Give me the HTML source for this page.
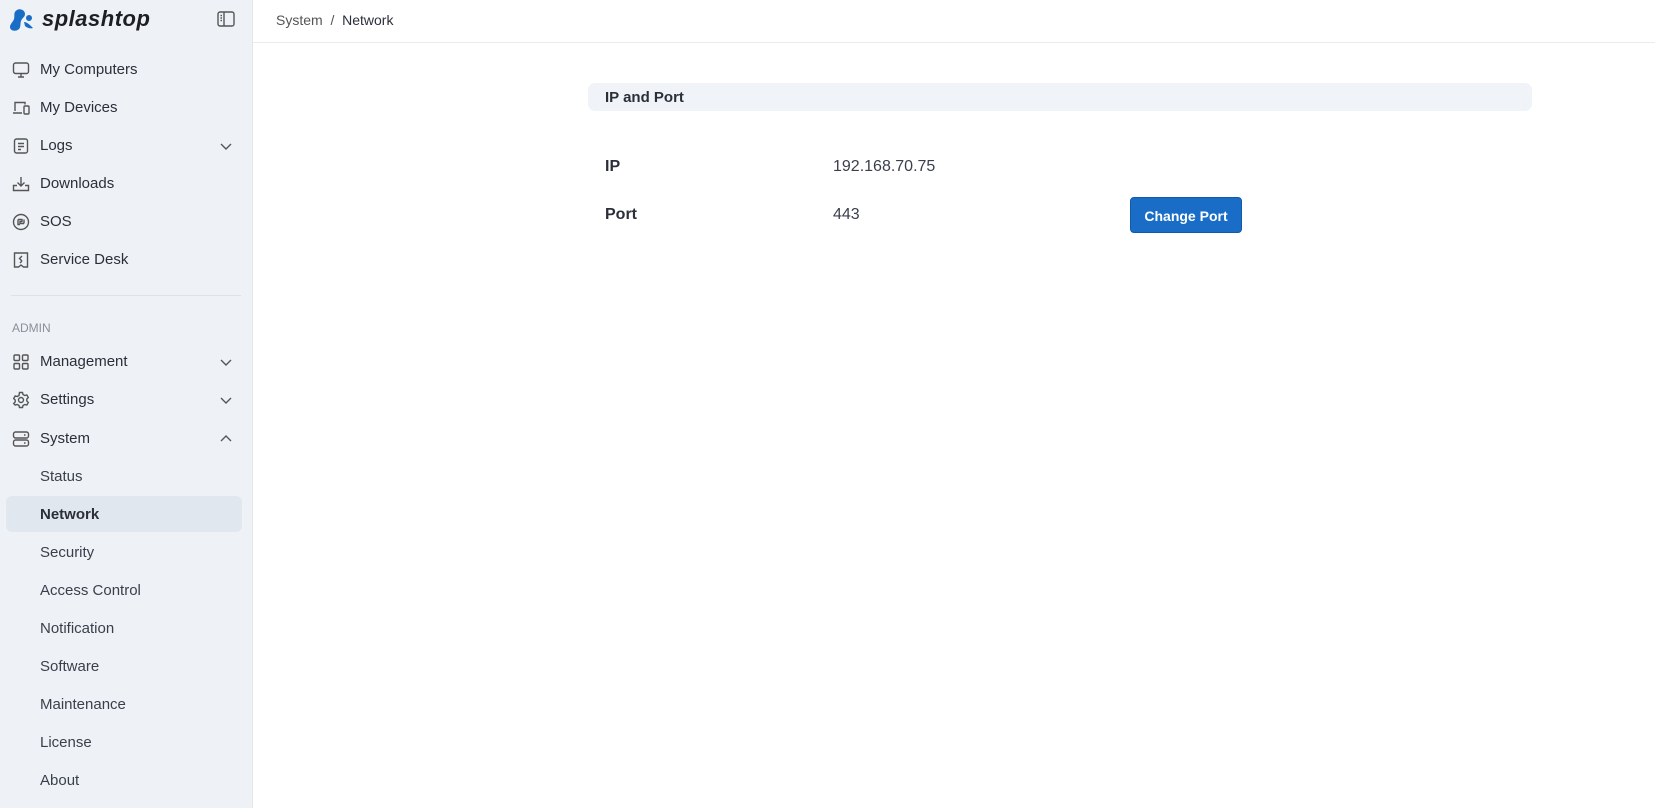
<!DOCTYPE html>
<html><head><meta charset="utf-8"><style>
*{margin:0;padding:0;box-sizing:border-box}
body{width:1655px;height:808px;overflow:hidden;font-family:"Liberation Sans",sans-serif;background:#fff;position:relative;color:#2b2f3a}
#sb{position:absolute;left:0;top:0;width:253px;height:808px;background:#eef2f6;border-right:1px solid #e3e7ec}
.it{position:absolute;left:0;width:253px;height:30px;font-size:15px;line-height:32px;color:#2b2f3a}
.it .t{position:absolute;left:40px;top:0}
.it svg.ic{position:absolute;left:12px;top:7px}
.it svg.ch{position:absolute;left:219px;top:10px}
.sub .t{color:#3a3f4b}
.hl{position:absolute;left:6px;top:496px;width:236px;height:36px;background:#e1e7ee;border-radius:6px}
#hdr{position:absolute;left:253px;top:0;right:0;height:43px;border-bottom:1px solid #e8ebef;font-size:14px;line-height:40px;padding-left:23px;color:#555}
#hdr b{font-weight:normal;color:#2b2f3a}
.card{position:absolute;left:588px;top:83px;width:944px;height:28px;background:#f0f4f8;border-radius:7px;font-weight:bold;font-size:15px;line-height:30px;padding-left:17px;color:#2b2f3a}
.lb{position:absolute;left:605px;font-weight:bold;font-size:16px}
.vl{position:absolute;left:833px;font-size:16px;color:#3a3f4b}
.btn{position:absolute;left:1130px;top:197px;width:112px;height:36px;background:#1a6dc6;border:1px solid #125aa8;border-radius:4px;color:#fff;font-weight:bold;font-size:14px;line-height:36px;text-align:center}
</style></head><body>
<div id="sb">
 <svg style="position:absolute;left:9px;top:8px" width="28" height="26" viewBox="0 0 28 26"><path d="M8 2c3-2 8 0 8 4 0 3-3 4-4 7-1 3 0 6-2 8-3 3-9 2-9-2 0-3 3-5 4-8 1-3-1-7 3-9z" fill="#1a6dc6"/><circle cx="20" cy="10" r="3" fill="#1a6dc6"/><path d="M15 14c3 0 6 3 9 6-2 1-6 0-8-2z" fill="#1a6dc6"/></svg>
 <div style="position:absolute;left:42px;top:6px;font-size:22px;font-style:italic;font-weight:bold;color:#1d1f25;letter-spacing:0.5px">splashtop</div>
 <svg style="position:absolute;left:217px;top:11px" width="18" height="16" viewBox="0 0 18 16" fill="none" stroke="#555" stroke-width="1.4"><rect x="1" y="1" width="16" height="14" rx="2"/><path d="M7 1v14M3.5 4.5h1.5M3.5 7h1.5M3.5 9.5h1.5"/></svg>

 <div class="it" style="top:54px"><svg class="ic" width="18" height="18" viewBox="0 0 18 18" fill="none" stroke="#555" stroke-width="1.4"><rect x="1.5" y="2" width="15" height="10.5" rx="2"/><path d="M9 12.5v3M6 16h6"/></svg><span class="t">My Computers</span></div>
 <div class="it" style="top:92px"><svg class="ic" width="18" height="18" viewBox="0 0 18 18" fill="none" stroke="#555" stroke-width="1.4"><path d="M3 12V3.5h10v2M1 14h9"/><rect x="12" y="7" width="5" height="8" rx="1"/></svg><span class="t">My Devices</span></div>
 <div class="it" style="top:130px"><svg class="ic" width="18" height="18" viewBox="0 0 18 18" fill="none" stroke="#555" stroke-width="1.4"><rect x="2.5" y="2" width="13" height="14" rx="2"/><path d="M6 6.5h6M6 9.5h6M6 12.5h3"/></svg><span class="t">Logs</span><svg class="ch" width="14" height="12" viewBox="0 0 14 12" fill="none" stroke="#555" stroke-width="1.4"><path d="M2 4l5 5 5-5"/></svg></div>
 <div class="it" style="top:168px"><svg class="ic" width="18" height="18" viewBox="0 0 18 18" fill="none" stroke="#555" stroke-width="1.4"><path d="M9 2v9M5.5 7.5L9 11l3.5-3.5M5 10.5H1.5v5h15v-5H13"/></svg><span class="t">Downloads</span></div>
 <div class="it" style="top:206px"><svg class="ic" width="18" height="18" viewBox="0 0 18 18" fill="none" stroke="#555" stroke-width="1.4"><circle cx="9" cy="9" r="7.5"/><path d="M6 6.5h4v2H8v2h4M6 6.5v5h2M12 10.5v-4"/></svg><span class="t">SOS</span></div>
 <div class="it" style="top:244px"><svg class="ic" width="18" height="18" viewBox="0 0 18 18" fill="none" stroke="#555" stroke-width="1.4"><path d="M2.5 2h13v14h-4l-2.5-2-2.5 2h-4z"/><path d="M10 5l-2.5 2.5L10 10M8 12l2-2"/></svg><span class="t">Service Desk</span></div>

 <div style="position:absolute;left:11px;top:295px;width:230px;height:1px;background:#dde2e8"></div>
 <div style="position:absolute;left:12px;top:321px;font-size:12px;color:#8a8f99">ADMIN</div>

 <div class="it" style="top:346px"><svg class="ic" width="18" height="18" viewBox="0 0 18 18" fill="none" stroke="#555" stroke-width="1.4"><rect x="2" y="2" width="5.5" height="5.5" rx="1"/><rect x="10.5" y="2" width="5.5" height="5.5" rx="1"/><rect x="2" y="10.5" width="5.5" height="5.5" rx="1"/><rect x="10.5" y="10.5" width="5.5" height="5.5" rx="1"/></svg><span class="t">Management</span><svg class="ch" width="14" height="12" viewBox="0 0 14 12" fill="none" stroke="#555" stroke-width="1.4"><path d="M2 4l5 5 5-5"/></svg></div>
 <div class="it" style="top:384px"><svg class="ic" width="18" height="18" viewBox="0 0 18 18" fill="none" stroke="#555" stroke-width="1.4"><circle cx="9" cy="9" r="2.5"/><path d="M7.5 1.5h3l.5 2 1.8 1 2-.6 1.5 2.6-1.5 1.5v2l1.5 1.5-1.5 2.6-2-.6-1.8 1-.5 2h-3l-.5-2-1.8-1-2 .6L1.7 12.5l1.5-1.5v-2L1.7 7.5l1.5-2.6 2 .6 1.8-1z"/></svg><span class="t">Settings</span><svg class="ch" width="14" height="12" viewBox="0 0 14 12" fill="none" stroke="#555" stroke-width="1.4"><path d="M2 4l5 5 5-5"/></svg></div>
 <div class="it" style="top:423px"><svg class="ic" width="18" height="18" viewBox="0 0 18 18" fill="none" stroke="#555" stroke-width="1.4"><rect x="1.5" y="2" width="15" height="6" rx="2"/><rect x="1.5" y="10" width="15" height="6" rx="2"/><path d="M12 5h1.5M12 13h1.5"/></svg><span class="t">System</span><svg class="ch" width="14" height="12" viewBox="0 0 14 12" fill="none" stroke="#555" stroke-width="1.4"><path d="M2 8l5-5 5 5"/></svg></div>

 <div class="hl"></div>
 <div class="it sub" style="top:461px"><span class="t">Status</span></div>
 <div class="it sub" style="top:499px"><span class="t" style="font-weight:bold;color:#2b2f3a">Network</span></div>
 <div class="it sub" style="top:537px"><span class="t">Security</span></div>
 <div class="it sub" style="top:575px"><span class="t">Access Control</span></div>
 <div class="it sub" style="top:613px"><span class="t">Notification</span></div>
 <div class="it sub" style="top:651px"><span class="t">Software</span></div>
 <div class="it sub" style="top:689px"><span class="t">Maintenance</span></div>
 <div class="it sub" style="top:727px"><span class="t">License</span></div>
 <div class="it sub" style="top:765px"><span class="t">About</span></div>
</div>
<div id="hdr">System &nbsp;/&nbsp; <b>Network</b></div>
<div class="card">IP and Port</div>
<div class="lb" style="top:158px">IP</div><div class="vl" style="top:158px">192.168.70.75</div>
<div class="lb" style="top:206px">Port</div><div class="vl" style="top:206px">443</div>
<div class="btn">Change Port</div>
</body></html>
